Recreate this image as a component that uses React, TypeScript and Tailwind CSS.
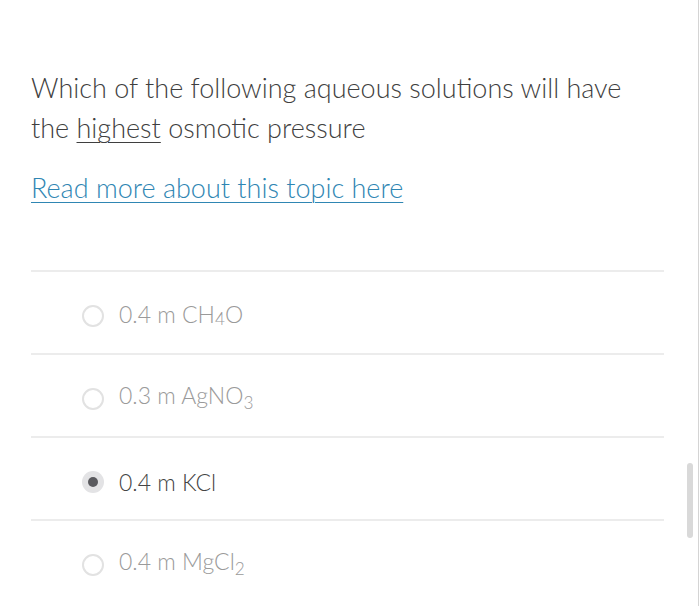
import React from "react";

type Option = { id: string; label: React.ReactNode };

const options: Option[] = [
  { id: "a", label: <>0.4 m CH<span className="align-[-0.1em] text-[0.75em]">4</span>O</> },
  { id: "b", label: <>0.3 m AgNO<span className="align-[-0.3em] text-[0.75em]">3</span></> },
  { id: "c", label: <>0.4 m KCl</> },
  { id: "d", label: <>0.4 m MgCl<span className="align-[-0.3em] text-[0.75em]">2</span></> },
];

const selected = "c";

export default function App() {
  return (
    <div className="h-[606px] w-[700px] overflow-hidden bg-white pr-[1px] font-['Lato',sans-serif]">
      <div className="flex h-full border-r border-[#d4d4d4]">
        {/* question + answers */}
        <div className="flex-1 pl-[31px] pr-[23px] pt-[68px]">
          <p className="text-[27px] font-light leading-[40px] text-[#3f3f3f]">
            Which of the following aqueous solutions will have
            <br />
            the <span className="underline decoration-1 underline-offset-4">highest</span> osmotic pressure
          </p>
          <a className="mt-[20px] block text-[27px] font-light leading-[40px] text-[#2f86b3] underline decoration-1 underline-offset-4">
            Read more about this topic here
          </a>

          <div className="mt-[62px]">
            {options.map((o) => {
              const isSel = o.id === selected;
              return (
                <div key={o.id} className="border-t-2 border-[#ececec] pl-[51px] pt-[31px] pb-[24px]">
                  <div className="flex h-[26px] items-center gap-[15px]">
                    {isSel ? (
                      <div className="flex h-[22px] w-[22px] items-center justify-center rounded-full bg-[#e3e3e5]">
                        <div className="h-[10px] w-[10px] rounded-full bg-[#5a5a5e]" />
                      </div>
                    ) : (
                      <div className="h-[22px] w-[22px] rounded-full border-2 border-[#e2e2e2]" />
                    )}
                    <span className={`text-[23px] font-light leading-[26px] ${isSel ? "text-[#444]" : "text-[#9a9a9a]"}`}>
                      {o.label}
                    </span>
                  </div>
                </div>
              );
            })}
          </div>
        </div>

        {/* scrollbar track */}
        <div className="flex w-[11px] flex-col pt-[463px]">
          <div className="h-[75px] w-[6px] rounded-full bg-[#d9d9d9]" />
        </div>
      </div>
    </div>
  );
}
